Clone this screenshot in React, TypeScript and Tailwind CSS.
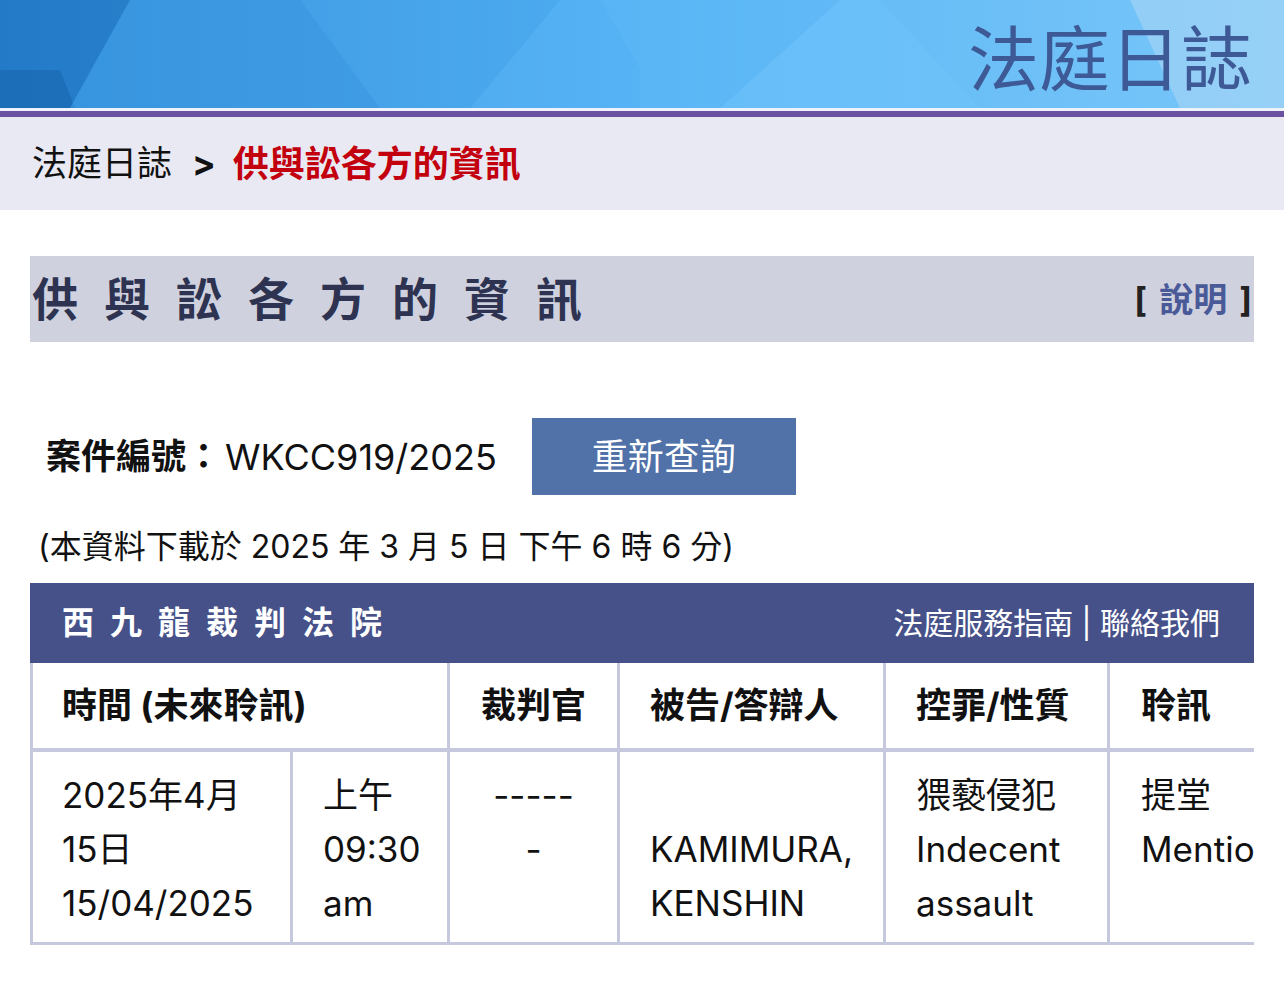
import React from 'react'

const font = { fontFamily: 'Inter, "Noto Sans CJK TC", sans-serif' }

function Banner() {
  return (
    <div className="relative h-[108px] overflow-hidden bg-gradient-to-r from-[#2a86d4] via-[#52b0f3] to-[#7ec8f8]">
      <svg className="absolute inset-0 h-full w-full" viewBox="0 0 1284 108" preserveAspectRatio="none">
        <polygon points="0,0 130,0 70,108 0,108" fill="#1f74bf" opacity="0.6" />
        <polygon points="0,70 60,70 75,108 0,108" fill="#1866ae" opacity="0.6" />
        <polygon points="70,108 130,0 300,0 380,108" fill="#3d9be3" opacity="0.6" />
        <polygon points="380,108 300,0 560,0 470,108" fill="#4aa8ee" opacity="0.5" />
        <polygon points="470,108 560,0 600,0 640,70 640,108" fill="#5ab6f5" opacity="0.5" />
        <polygon points="600,0 840,0 720,108 640,108 640,70" fill="#62bbf7" opacity="0.5" />
        <polygon points="720,108 840,0 880,0 980,108" fill="#70c4fb" opacity="0.6" />
        <polygon points="880,0 1130,0 1180,108 980,108" fill="#6fc2f9" opacity="0.4" />
        <polygon points="1130,0 1284,0 1284,108 1180,108" fill="#a6d6f7" opacity="0.6" />
      </svg>
      <div className="relative flex h-full items-center justify-end pr-[32px] pt-[10px]">
        <span className="text-[71px] leading-none text-[#3d5a97]">法庭日誌</span>
      </div>
    </div>
  )
}

function Breadcrumb() {
  return (
    <div className="flex h-[93px] items-center bg-[#e9e9f3] px-[32px] text-[35px]">
      <span className="text-[#111]">法庭日誌</span>
      <span className="ml-[20px] font-bold text-[#111]">&gt;</span>
      <span className="ml-[17px] text-[36px] font-bold text-[#c3000d]">供與訟各方的資訊</span>
    </div>
  )
}

const cell = 'border-[3px] border-[#c6c9de] align-top pt-[16px]'
const head = 'border-[3px] border-t-0 border-[#c6c9de] align-middle'

export default function App() {
  return (
    <div className="min-h-[986px] bg-white text-[#111]" style={font}>
      <Banner />
      <div className="h-[3px] bg-[#eef3fb]" />
      <div className="h-[6px] bg-[#6a51a2]" />
      <Breadcrumb />

      <div className="mx-[30px] mt-[46px] flex h-[86px] items-center justify-between bg-[#cfd1de] px-[2px]">
        <h1 className="text-[46px] font-bold leading-none tracking-[26px] text-[#2e3352]">供與訟各方的資訊</h1>
        <div className="flex items-center gap-[12px] text-[34px] font-bold">
          <span className="text-[#222]">[</span>
          <span className="text-[#4a5a98]">說明</span>
          <span className="text-[#222]">]</span>
        </div>
      </div>

      <div className="mt-[76px] flex items-center pl-[46px]">
        <span className="text-[35px] font-bold">案件編號：</span>
        <span className="ml-[4px] text-[36px]">WKCC919/2025</span>
        <button className="ml-[35px] flex h-[77px] w-[264px] items-center justify-center bg-[#5072a8] text-[36px] text-white">
          重新查詢
        </button>
      </div>

      <div className="mt-[36px] pl-[38px] text-[32px] leading-none">(本資料下載於 2025 年 3 月 5 日 下午 6 時 6 分)</div>

      <div className="mx-[30px] mt-[20px] overflow-hidden">
        <div className="flex h-[80px] items-center justify-between bg-[#46518a] pl-[32px] pr-[34px] text-white">
          <span className="text-[32px] font-bold tracking-[16px]">西九龍裁判法院</span>
          <span className="text-[30px]">法庭服務指南 | 聯絡我們</span>
        </div>
        <table className="w-[1330px] table-fixed border-collapse text-[35px]">
          <colgroup>
            <col className="w-[260px]" />
            <col className="w-[157px]" />
            <col className="w-[170px]" />
            <col className="w-[266px]" />
            <col className="w-[224px]" />
            <col className="w-[253px]" />
          </colgroup>
          <thead>
            <tr className="h-[87px] font-bold">
              <th colSpan={2} className={`${head} pl-[29px] text-left`}>時間 (未來聆訊)</th>
              <th className={`${head} text-center`}>裁判官</th>
              <th className={`${head} pl-[30px] text-left`}>被告/答辯人</th>
              <th className={`${head} pl-[30px] text-left`}>控罪/性質</th>
              <th className={`${head} pl-[31px] text-left`}>聆訊</th>
            </tr>
          </thead>
          <tbody className="leading-[54px]">
            <tr className="h-[193px] border-t-[4px] border-[#c6c9de]">
              <td className={`${cell} pl-[29px]`}>
                2025年4月<br />15日<br />15/04/2025
              </td>
              <td className={`${cell} pl-[30px]`}>
                上午<br />09:30<br />am
              </td>
              <td className={`${cell} text-center`}>
                -----<br />-
              </td>
              <td className={`${cell} pl-[30px]`}>
                <br />KAMIMURA,<br />KENSHIN
              </td>
              <td className={`${cell} pl-[30px]`}>
                猥褻侵犯<br />Indecent<br />assault
              </td>
              <td className={`${cell} whitespace-nowrap pl-[31px]`}>
                提堂<br />Mention
              </td>
            </tr>
          </tbody>
        </table>
      </div>
    </div>
  )
}
